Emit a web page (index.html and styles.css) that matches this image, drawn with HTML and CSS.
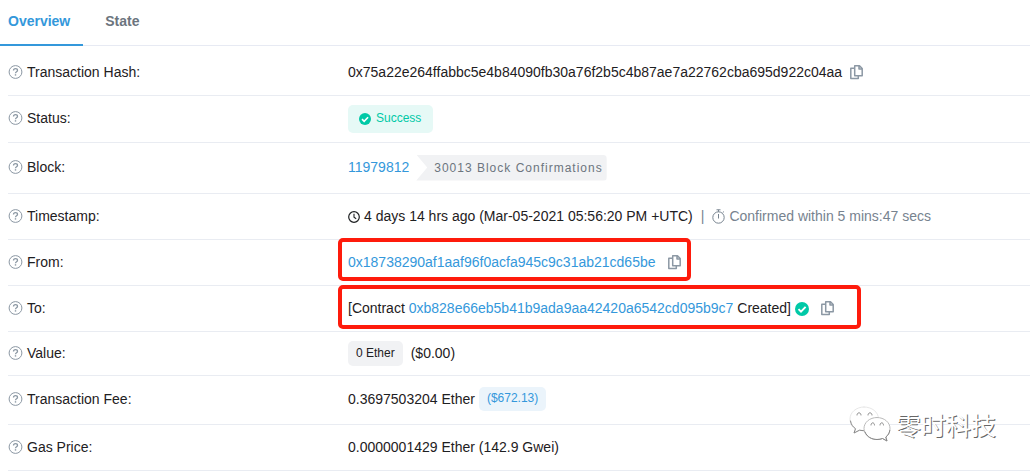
FILE: index.html
```html
<!DOCTYPE html>
<html lang="en">
<head>
<meta charset="utf-8">
<meta name="viewport" content="width=device-width, initial-scale=1">
<title>Transaction Details</title>
<link rel="stylesheet" href="styles.css">
</head>
<body>
<svg class="sprite" aria-hidden="true">
  <symbol id="help" viewBox="0 0 14 14"><circle cx="7" cy="7" r="6.4" fill="none" stroke="currentColor"/><path d="M5 5.600C5 4.300 5.900 3.700 7 3.700s2 .7 2 1.700C9 6.800 7 6.700 7 8.200" fill="none" stroke="currentColor" stroke-width="1.300"/><rect x="6.300" y="9.200" width="1.400" height="1.400" fill="currentColor"/></symbol>
  <symbol id="copy" viewBox="0 0 13 15"><path d="M4.700.8h4.800l2.700 2.700v7.200h-7.500zM9 .8v3.200h3.200M4.500 3.300H.8v10.200h7.500v-2.600" fill="none" stroke="currentColor" stroke-width="1.500" stroke-linejoin="round"/></symbol>
  <symbol id="check" viewBox="0 0 14 14"><circle cx="7" cy="7" r="7" fill="currentColor"/><path d="M3.500 7.100l2.500 2.500 4.600-4.700" fill="none" stroke="#fff" stroke-width="1.900"/></symbol>
  <symbol id="clock" viewBox="0 0 12 12"><circle cx="6" cy="6" r="5.300" fill="none" stroke="currentColor" stroke-width="1.200"/><path d="M6 2.800V6.300L8.200 7.700" fill="none" stroke="currentColor" stroke-width="1.100"/></symbol>
  <symbol id="timer" viewBox="0 0 13 15"><circle cx="6.500" cy="8.500" r="5.700" fill="none" stroke="currentColor"/><path d="M4.500.8h4M6.500.8v2M6.500 5v4.500M10.700 3.600l1.200-1" fill="none" stroke="currentColor"/></symbol>
</svg>

<nav class="tabs">
  <a class="tab tab-active" href="#overview">Overview</a>
  <a class="tab" href="#state">State</a>
</nav>

<main class="panel" id="overview">
  <dl class="details">
    <div class="row row-first">
      <dt class="label"><svg class="icon-help"><use href="#help"/></svg>Transaction Hash:</dt>
      <dd class="value"><span>0x75a22e264ffabbc5e4b84090fb30a76f2b5c4b87ae7a22762cba695d922c04aa</span><button class="copy" aria-label="Copy transaction hash"><svg class="icon-copy"><use href="#copy"/></svg></button></dd>
    </div>
    <div class="row row-status">
      <dt class="label"><svg class="icon-help"><use href="#help"/></svg>Status:</dt>
      <dd class="value"><span class="badge badge-success"><svg class="icon-sm"><use href="#check"/></svg>Success</span></dd>
    </div>
    <div class="row row-block">
      <dt class="label"><svg class="icon-help"><use href="#help"/></svg>Block:</dt>
      <dd class="value"><a href="#block">11979812</a><span class="confirmations">30013 Block Confirmations</span></dd>
    </div>
    <div class="row">
      <dt class="label"><svg class="icon-help"><use href="#help"/></svg>Timestamp:</dt>
      <dd class="value"><svg class="icon-sm"><use href="#clock"/></svg><span class="after-icon">4 days 14 hrs ago (Mar-05-2021 05:56:20 PM +UTC)</span><span class="divider">|</span><span class="muted"><svg class="icon-copy"><use href="#timer"/></svg>Confirmed within 5 mins:47 secs</span></dd>
    </div>
    <div class="row">
      <dt class="label"><svg class="icon-help"><use href="#help"/></svg>From:</dt>
      <dd class="value"><span class="marked"><a href="#from">0x18738290af1aaf96f0acfa945c9c31ab21cd65be</a><button class="copy copy-far" aria-label="Copy sender address"><svg class="icon-copy"><use href="#copy"/></svg></button></span></dd>
    </div>
    <div class="row">
      <dt class="label"><svg class="icon-help"><use href="#help"/></svg>To:</dt>
      <dd class="value"><span class="marked marked-wide"><span>[Contract <a href="#contract">0xb828e66eb5b41b9ada9aa42420a6542cd095b9c7</a> Created]</span><svg class="icon-verified"><use href="#check"/></svg><button class="copy copy-far" aria-label="Copy contract address"><svg class="icon-copy"><use href="#copy"/></svg></button></span></dd>
    </div>
    <div class="row row-value">
      <dt class="label"><svg class="icon-help"><use href="#help"/></svg>Value:</dt>
      <dd class="value"><span class="badge">0 Ether</span><span class="fiat">($0.00)</span></dd>
    </div>
    <div class="row row-fee">
      <dt class="label"><svg class="icon-help"><use href="#help"/></svg>Transaction Fee:</dt>
      <dd class="value"><span>0.3697503204 Ether</span><span class="badge badge-info">($672.13)</span></dd>
    </div>
    <div class="row">
      <dt class="label"><svg class="icon-help"><use href="#help"/></svg>Gas Price:</dt>
      <dd class="value">0.0000001429 Ether (142.9 Gwei)</dd>
    </div>
  </dl>
</main>

<div class="watermark">
  <svg class="watermark-logo" viewBox="0 0 42 36" fill="#fff" stroke-linecap="round">
    <path d="M15 1C7 1 1 6.500 1 13c0 4 2 7.500 5.500 9.700L5 27l5.500-2.800c8 2 19-1 19-11.200C29.500 6 23 1 15 1z" stroke="#e8e8e8"/>
    <path d="M1.500 15c.5 3.500 2.500 6 5 7.700L5 27l5.500-2.800 5 .6" fill="none" stroke="#888"/>
    <path d="M28 11.500c-7.500 0-13 5-13 11s5.500 11 13 11c2 0 4-.3 5.500-1l4.500 2.500-1.200-4C39.500 29 41 26 41 22.500c0-6-5.500-11-13-11z" stroke="#bbb"/>
    <path d="M16 26c2 5 7 7.500 12 7.500 2 0 4-.3 5.500-1l4.500 2.500-1.200-4c2.200-1.500 3.700-4 4-6.500M8 9c0-3 4-3 4 0M19 9c0-3 4-3 4 0M22 19c0-3 3.500-3 3.500 0M31 19c0-3 3.500-3 3.500 0" fill="none" stroke="#888"/>
  </svg>
  <span>零时科技</span>
</div>
</body>
</html>
```
FILE: styles.css
```css
* { box-sizing: border-box; }

body {
  margin: 0;
  position: relative;
  background: #fff;
  color: #1e2022;
  font: 14px/21px "Liberation Sans", Arial, sans-serif;
}

a { color: #3498db; text-decoration: none; }
svg { flex: none; }
.sprite { position: absolute; width: 0; height: 0; }

.tabs {
  display: flex;
  gap: 9px;
  border-bottom: 1px solid #e7eaf3;
}
.tab {
  padding: 11px 13px 12px;
  margin-bottom: -1px;
  border-bottom: 2px solid transparent;
  color: #6c757e;
  font-weight: bold;
}
.tab-active {
  padding-left: 8px;
  border-color: #3498db;
  color: #3498db;
}

.panel { padding-left: 8px; }
.details { margin: 0; }
.row {
  display: grid;
  grid-template-columns: 340px 1fr;
  align-items: center;
  padding: 12px 0;
  border-bottom: 1px solid #e9ecf2;
}
.row-first { padding: 16px 0 12px; }
.row-status { padding: 9px 0; }
.row-status .label { padding-bottom: 1px; }
.row-block { padding: 14px 0 15px; }
.row-value { padding: 9px 0; }
.row-fee { padding: 11px 0 13px; }

.label, .value { display: flex; align-items: center; margin: 0; }
.label { gap: 4px; }
.label svg { margin-bottom: 1px; }
.value { white-space: nowrap; }

.icon-help { width: 15px; height: 14px; color: #8c98a4; }
.icon-copy { width: 13px; height: 15px; }
.icon-sm { width: 12px; height: 12px; }
.icon-verified { width: 14px; height: 14px; margin-left: 4px; color: #00c9a7; }

.copy {
  display: flex;
  margin: 0 0 0 8px;
  padding: 0;
  border: 0;
  background: none;
  color: #8c98a4;
}
.copy-far { margin-left: 12px; }

.badge {
  display: flex;
  align-items: center;
  gap: 5px;
  padding: 2px 8px;
  border-radius: 5px;
  background: #f1f2f4;
  font-size: 12px;
}
.badge-success { padding: 3px 12px 4px 11px; background: #e6f9f6; color: #00c9a7; }
.badge-info { margin-left: 4px; padding: 1px 8px 2px; background: #ebf4fb; color: #3498db; }
.fiat { margin-left: 8px; }

.confirmations {
  margin: -3px 0 -3px 7px;
  padding: 3px 4px 2px 18px;
  border-radius: 0 4px 4px 0;
  background: #f1f2f4;
  clip-path: polygon(0 0, 100% 0, 100% 100%, 0 100%, 11px 50%);
  color: #6c757e;
  font-size: 12px;
  letter-spacing: 1px;
}

.after-icon { margin-left: 4px; }
.divider { margin: 0 8px; color: #77838f; }
.muted { display: flex; align-items: center; gap: 4px; color: #77838f; }

.marked { position: relative; display: flex; align-items: center; }
.marked::after {
  content: "";
  position: absolute;
  inset: -14px -10px -8px;
  border: 4px solid #fe1b0c;
  border-radius: 5px;
  pointer-events: none;
}
.marked-wide::after { top: -13px; right: -27px; bottom: -10px; }

.watermark {
  position: absolute;
  right: 34px;
  bottom: 29px;
  display: flex;
  align-items: center;
  gap: 5px;
  color: #fff;
  font: 25px/36px "Noto Sans CJK SC", sans-serif;
  text-shadow: 1px 1px 0 #666;
}
.watermark-logo { width: 42px; height: 36px; }
```
